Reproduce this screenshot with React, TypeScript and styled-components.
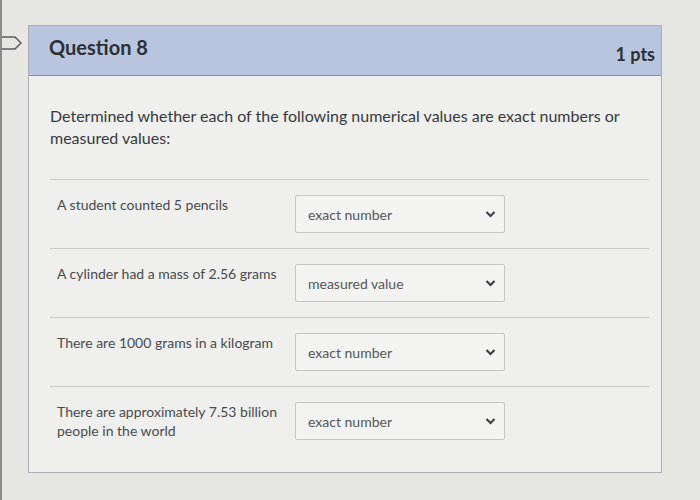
import styled, { createGlobalStyle } from 'styled-components'

const GlobalStyle = createGlobalStyle`
    html, body {
        margin: 0;
        padding: 0;
        background: #e6e6e3;
    }
    body {
        font-family: Lato, "Open Sans", "Liberation Sans", sans-serif;
    }
`

const Page = styled.div`
    display: flex;
    align-items: flex-start;
    width: 700px;
    height: 500px;
    box-sizing: border-box;
    border-left: 2px solid #8c8c8a;
    padding-top: 25px;
`

const Gutter = styled.div`
    width: 26px;
    padding-top: 11px;
    display: flex;
`

const Card = styled.div`
    width: 634px;
    border: 1px solid #aeb0b3;
    background: #efefed;
    box-sizing: border-box;
`

const Header = styled.div`
    height: 50px;
    box-sizing: border-box;
    display: flex;
    align-items: center;
    justify-content: space-between;
    padding: 0 6px 0 20px;
    background: #b9c4de;
    border-bottom: 1px solid #8592ae;
`

const Title = styled.h2`
    margin: 0 0 8px;
    font-size: 20px;
    font-weight: 700;
    color: #2d3036;
`

const Points = styled.span`
    margin-top: 6px;
    font-size: 18px;
    font-weight: 700;
    color: #2d3036;
`

const Body = styled.div`
    padding: 29px 12px 17px 21px;
`

const Prompt = styled.p`
    margin: 0 0 30px;
    font-size: 16px;
    line-height: 22px;
    color: #363a40;
`

const Row = styled.div`
    display: flex;
    align-items: flex-start;
    padding: 15px 0;
    border-top: 1px solid #c9cacb;
`

const Label = styled.div`
    width: 226px;
    margin: 0 12px 0 7px;
    font-size: 14px;
    line-height: 19px;
    color: #484b50;
`

const Select = styled.div`
    width: 210px;
    height: 38px;
    box-sizing: border-box;
    display: flex;
    align-items: center;
    justify-content: space-between;
    padding: 0 8px 0 12px;
    border: 1px solid #c4c6c8;
    border-radius: 2px;
    background: #f3f3f1;
    font-size: 14px;
    color: #53575c;
`

const rows = [
    { label: 'A student counted 5 pencils', value: 'exact number' },
    { label: 'A cylinder had a mass of 2.56 grams', value: 'measured value' },
    { label: 'There are 1000 grams in a kilogram', value: 'exact number' },
    { label: 'There are approximately 7.53 billion people in the world', value: 'exact number' },
]

function Chevron() {
    return (
        <svg width="11" height="8" viewBox="0 0 11 8">
            <polyline points="1.5,2 5.5,6 9.5,2" fill="none" stroke="#3d4046" strokeWidth="2.2" />
        </svg>
    )
}

export default function App() {
    return (
        <>
            <GlobalStyle />
            <Page>
                <Gutter>
                    <svg width="20" height="14" viewBox="0 0 20 14">
                        <path d="M-1 1 H13 L19 7 L13 13 H-1" fill="none" stroke="#5b5d61" strokeWidth="1.5" />
                    </svg>
                </Gutter>
                <Card>
                    <Header>
                        <Title>Question 8</Title>
                        <Points>1 pts</Points>
                    </Header>
                    <Body>
                        <Prompt>
                            Determined whether each of the following numerical values are exact numbers or measured values:
                        </Prompt>
                        {rows.map((row, i) => (
                            <Row key={i}>
                                <Label>{row.label}</Label>
                                <Select>
                                    {row.value}
                                    <Chevron />
                                </Select>
                            </Row>
                        ))}
                    </Body>
                </Card>
            </Page>
        </>
    )
}
